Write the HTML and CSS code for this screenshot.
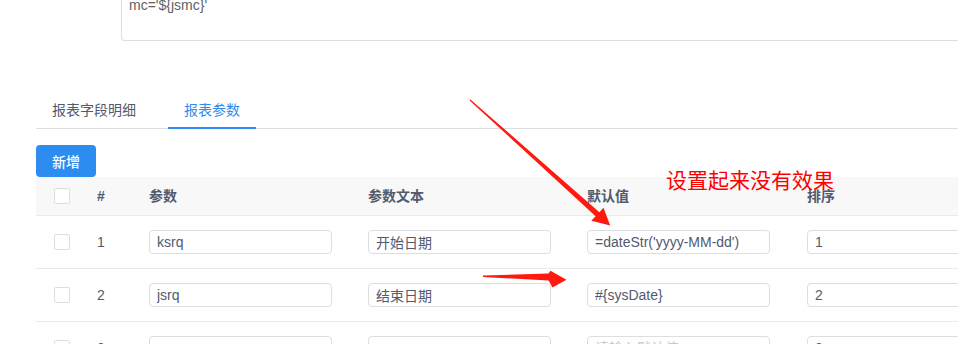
FILE: index.html
```html
<!DOCTYPE html>
<html lang="zh">
<head>
  <meta charset="UTF-8" />
  <title>报表参数</title>
  <link rel="stylesheet" href="styles.css">
</head>
<body>

<div class="page">
  <div class="sql-box">
    <div class="sql-text">mc='${jsmc}'</div>
  </div>

  <div class="tabs">
    <div class="tab">报表字段明细</div>
    <div class="tab active">报表参数</div>
  </div>

  <button class="btn-add">新增</button>

  <div class="grid">
    <div class="row head">
      <div class="cell"><span class="check"></span></div>
      <div class="cell">#</div>
      <div class="cell">参数</div>
      <div class="cell">参数文本</div>
      <div class="cell">默认值</div>
      <div class="cell">排序</div>
    </div>
    <div class="row">
      <div class="cell"><span class="check"></span></div>
      <div class="cell">1</div>
      <div class="cell"><input class="field" value="ksrq"></div>
      <div class="cell"><input class="field" value="开始日期"></div>
      <div class="cell"><input class="field" value="=dateStr('yyyy-MM-dd')"></div>
      <div class="cell"><input class="field" value="1"></div>
    </div>
    <div class="row">
      <div class="cell"><span class="check"></span></div>
      <div class="cell">2</div>
      <div class="cell"><input class="field" value="jsrq"></div>
      <div class="cell"><input class="field" value="结束日期"></div>
      <div class="cell"><input class="field" value="#{sysDate}"></div>
      <div class="cell"><input class="field" value="2"></div>
    </div>
    <div class="row">
      <div class="cell"><span class="check"></span></div>
      <div class="cell">3</div>
      <div class="cell"><input class="field" value=""></div>
      <div class="cell"><input class="field" value=""></div>
      <div class="cell"><input class="field" value="" placeholder="请输入默认值"></div>
      <div class="cell"><input class="field" value="3"></div>
    </div>
  </div>

  <!-- annotations drawn over the screenshot -->
  <svg class="marks" width="958" height="344" viewBox="0 0 958 344">
    <polygon fill="#ff1a10" points="470.4,99.5 599.4,212.2 603.5,207.8 610.2,225.6 591.3,220.8 595.6,216.2 469.6,100.5" />
    <polygon fill="#ff1a10" points="483,275.6 548.5,273.6 550.5,270.8 566.5,279.8 552.5,287.4 548.5,280.6 483,277" />
  </svg>
  <div class="note">设置起来没有效果</div>
</div>

</body>
</html>
```

FILE: styles.css
```css
* { margin: 0; padding: 0; box-sizing: border-box; }

html, body {
  width: 958px;
  height: 344px;
  overflow: hidden;
  background: #fff;
  font-family: "Liberation Sans", "Noto Sans CJK SC", sans-serif;
  font-size: 14px;
  color: #515a6e;
}

.page {
  position: relative;
  width: 958px;
  height: 344px;
  overflow: hidden;
  padding-left: 36px;
}

.sql-box {
  display: flow-root;
  margin-left: 85px;
  width: 900px;
  height: 41px;
  border: 1px solid #dcdee2;
  border-top: none;
  border-radius: 0 0 4px 4px;
  padding: 0 7px;
  color: #606266;
  line-height: 20px;
}

.sql-text {
  margin-top: -5px;
}

.tabs {
  display: flex;
  margin-top: 51px;
  width: 1000px;
  border-bottom: 1px solid #dcdee2;
}

.tab {
  position: relative;
  padding: 8px 16px 7px;
  margin-right: 16px;
  line-height: 21px;
  color: #515a6e;
}

.tab.active {
  color: #2d8cf0;
}

.tab.active::after {
  content: "";
  position: absolute;
  left: 0;
  right: 0;
  bottom: -1px;
  height: 2px;
  background: #2d8cf0;
}

.btn-add {
  display: block;
  margin-top: 16px;
  width: 60px;
  height: 32px;
  border: none;
  border-radius: 4px;
  background: #2d8cf0;
  color: #fff;
  font-family: inherit;
  font-size: 14px;
  font-weight: 500;
}

.grid {
  width: 1100px;
}

.row {
  display: grid;
  grid-template-columns: 43px 52px 219px 219px 220px 1fr;
  align-items: center;
  height: 53px;
  border-bottom: 1px solid #e8eaec;
}

.row.head {
  height: 39px;
  background: #f8f8f9;
  font-weight: 700;
}

.cell {
  padding: 0 18px;
  line-height: 20px;
}

.check {
  display: block;
  width: 16px;
  height: 16px;
  border: 1px solid #dcdee2;
  border-radius: 2px;
  background: #fff;
}

.field {
  display: block;
  width: 183px;
  height: 24px;
  border: 1px solid #dcdee2;
  border-radius: 4px;
  padding: 0 7px;
  font-family: inherit;
  font-size: 14px;
  color: #515a6e;
  background: #fff;
  outline: none;
}

.field::placeholder {
  color: #c5c8ce;
}

.marks {
  position: absolute;
  left: 0;
  top: 0;
}

.note {
  position: absolute;
  left: 666px;
  top: 166px;
  font-family: "Noto Sans CJK SC", sans-serif;
  font-size: 21px;
  line-height: 26px;
  color: #ff0000;
}
```
